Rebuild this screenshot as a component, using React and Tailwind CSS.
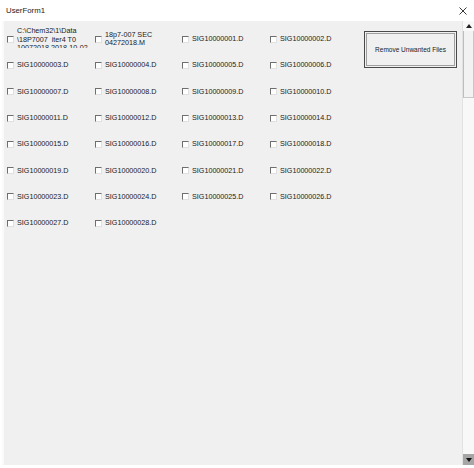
import React from "react";

const Box = () => (
  <span className="block w-[7px] h-[7px] shrink-0 bg-white border border-[#6e6e6e] border-r-[#e0e0e0] border-b-[#e0e0e0]" />
);

const Item = ({ label }) => (
  <div className="flex items-center gap-[3px] overflow-hidden">
    <Box />
    <span className="text-[7.2px] leading-[8px] text-[#1a1a1a] whitespace-nowrap">{label}</span>
  </div>
);

export default function App() {
  const names = [];
  for (let i = 1; i <= 28; i++) names.push("SIG" + String(10000000 + i) + ".D");
  return (
    <div
      className="w-[474px] h-[468px] bg-white flex flex-col overflow-hidden"
      style={{ fontFamily: "'Liberation Sans', Arial, sans-serif" }}
    >
      <div className="h-[21px] flex items-center justify-between pl-[6px] pr-[7px] shrink-0">
        <span className="text-[7.8px] text-[#1a1a1a]">UserForm1</span>
        <svg width="8" height="8" viewBox="0 0 8 8">
          <path d="M0.5 0.5L7.5 7.5M7.5 0.5L0.5 7.5" stroke="#222" strokeWidth="0.9" />
        </svg>
      </div>
      <div className="flex h-[444px] ml-[2px] border-l-2 border-[#fafafa]">
        <div className="flex-1 bg-[#f0f0f0] relative">
          <div className="pl-[3px] pt-[5px] grid grid-cols-[88px_87px_88px_88px] auto-rows-[26.3px]">
            <div className="flex items-start gap-[3px] overflow-hidden">
              <div className="mt-[10px]"><Box /></div>
              <div className="text-[7.2px] leading-[8.6px] text-[#1a1a1a] whitespace-nowrap h-[22px] overflow-hidden pt-[1px]">
                <div>C:\Chem32\1\Data</div>
                <div>\18P7007&nbsp; iter4 T0</div>
                <div>10072018 2018-10-02</div>
              </div>
            </div>
            <div className="flex items-center gap-[3px]">
              <Box />
              <div className="text-[7.2px] leading-[8.4px] text-[#1a1a1a] whitespace-nowrap">
                <div>18p7-007 SEC</div>
                <div>04272018.M</div>
              </div>
            </div>
            {names.map((n, i) => (
              <Item key={i} label={n} />
            ))}
          </div>
          <button className="absolute left-[360px] top-[10px] w-[93px] h-[37px] bg-[#f0f0f0] border border-[#4a4a4a] outline outline-1 outline-[#a0a0a0] -outline-offset-[3px] text-[6.5px] text-[#1a1a1a] whitespace-nowrap">
            Remove Unwanted Files
          </button>
        </div>
        <div className="w-[12px] bg-[#f8f8f8] border-l border-[#e2e2e2] flex flex-col">
          <div className="h-[10px] flex items-center justify-center">
            <svg width="6" height="4" viewBox="0 0 6 4"><path d="M0 4L3 0L6 4Z" fill="#222" /></svg>
          </div>
          <div className="h-[67px] bg-[#f2f2f2] border border-[#c8c8c8] border-t-0 border-l-[#bdbdbd]" />
          <div className="flex-1" />
          <div className="h-[11px] bg-[#a6a6a6] flex items-center justify-center">
            <svg width="6" height="4" viewBox="0 0 6 4"><path d="M0 0L3 4L6 0Z" fill="#111" /></svg>
          </div>
        </div>
      </div>
    </div>
  );
}
